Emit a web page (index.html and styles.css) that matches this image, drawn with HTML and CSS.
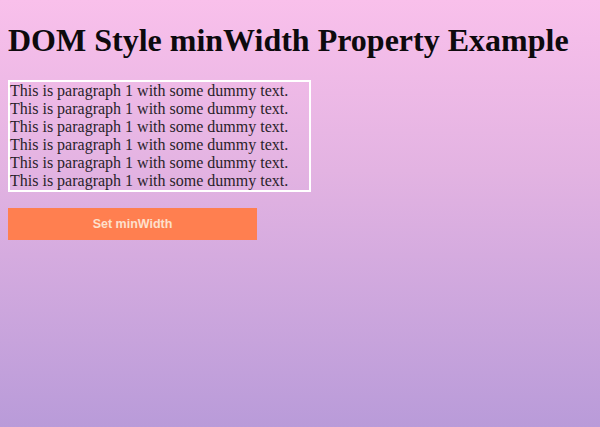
FILE: index.html
```html
<!DOCTYPE html>
<html lang="en">

<head>
  <meta charset="UTF-8" />
  <meta name="viewport" content="width=device-width, initial-scale=1.0" />
  <title>DOM Style minWidth Property</title>
  <link rel="stylesheet" href="styles.css">
</head>

<body>
  <h1>DOM Style minWidth Property Example</h1>

  <div class="sample">
    <p>This is paragraph 1 with some dummy text.</p>
    <p>This is paragraph 1 with some dummy text.</p>
    <p>This is paragraph 1 with some dummy text.</p>
    <p>This is paragraph 1 with some dummy text.</p>
    <p>This is paragraph 1 with some dummy text.</p>
    <p>This is paragraph 1 with some dummy text.</p>
  </div>

  <button class="btn">Set minWidth</button>

  <script>
    // set min-width on the sample box
    const btn = document.querySelector('.btn');
    const sample = document.querySelector('.sample');

    btn.addEventListener('click', function () {
      sample.style.minWidth = '400px';
    });
  </script>
</body>

</html>
```

FILE: styles.css
```css
html {
  min-height: 100%;
  background: linear-gradient(180deg, #f9c0eb 0%, #e3b3e2 40%, #b99bd9 100%);
}

body {
  margin: 8px;
  font-family: "Liberation Serif", "Times New Roman", serif;
  color: #2a1f2a;
}

h1 {
  font-size: 32px;
  margin: 14px 0 21px;
  color: #0d0a0d;
}

.sample {
  width: 299px;
  border: 2px solid #fff;
  font-size: 16px;
}

.sample p {
  margin: 0;
}

.btn {
  display: block;
  margin-top: 16px;
  width: 249px;
  height: 32px;
  border: none;
  background: #ff7f50;
  color: #fde0cc;
  font-family: "Liberation Sans", Arial, sans-serif;
  font-weight: bold;
  font-size: 12.5px;
  cursor: pointer;
}
```
